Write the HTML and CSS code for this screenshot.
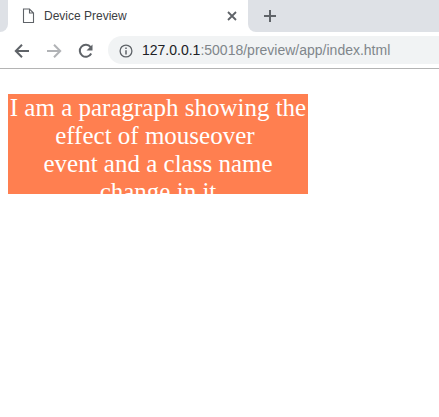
FILE: index.html
```html
<!DOCTYPE html>
<html lang="en">
<head>
    <meta charset="UTF-8">
    <title>Device Preview</title>
    <link rel="stylesheet" href="styles.css">
</head>
<body>
    <div class="browser">
        <div class="tabstrip">
            <div class="tab">
                <svg class="tab-icon" width="16" height="16" viewBox="0 0 16 16">
                    <path d="M2.5 1H8.5L12.5 5V14.5H2.5Z M8.5 1V5H12.5" fill="none" stroke="#5f6368" stroke-width="1.1"/>
                </svg>
                <span class="tab-title">Device Preview</span>
                <svg class="tab-close" width="10" height="10" viewBox="0 0 10 10">
                    <path d="M1 1L9 9M9 1L1 9" stroke="#5f6368" stroke-width="1.8"/>
                </svg>
            </div>
            <div class="tab-rest">
                <svg class="tab-new" width="14" height="14" viewBox="0 0 14 14">
                    <path d="M7 1V13M1 7H13" stroke="#5f6368" stroke-width="2"/>
                </svg>
            </div>
        </div>
        <div class="toolbar">
            <svg class="nav-icon" width="16" height="16" viewBox="0 0 16 16">
                <path d="M15 8H2M8 1.8L1.8 8L8 14.2" fill="none" stroke="#5f6368" stroke-width="2"/>
            </svg>
            <svg class="nav-icon" width="16" height="16" viewBox="0 0 16 16">
                <path d="M1 8H14M8 1.8L14.2 8L8 14.2" fill="none" stroke="#b1b3b6" stroke-width="2"/>
            </svg>
            <svg class="nav-icon" width="16" height="16" viewBox="0 0 16 16">
                <path d="M13.2 10.5A6 6 0 1 1 12.6 4.2" fill="none" stroke="#5f6368" stroke-width="2"/>
                <path d="M14.5 1.5V7.5H8.5Z" fill="#5f6368"/>
            </svg>
            <div class="omnibox">
                <svg class="info-icon" width="14" height="14" viewBox="0 0 14 14">
                    <circle cx="7" cy="7" r="5.9" fill="none" stroke="#5f6368" stroke-width="1.3"/>
                    <path d="M7 6.2V10.4M7 3.6V5" stroke="#5f6368" stroke-width="1.5"/>
                </svg>
                <span class="url"><span class="url-host">127.0.0.1</span>:50018/preview/app/index.html</span>
            </div>
        </div>
    </div>

    <p class="box">I am a paragraph showing the effect of mouseover&nbsp;<br>event and a class name change in it</p>
</body>
</html>
```

FILE: styles.css
```css
body {
    margin: 0;
    background-color: #fff;
    font-family: "Liberation Serif", serif;
}
.browser {
    font-family: "Liberation Sans", sans-serif;
    border-bottom: 1px solid #b4b4b4;
}
.tabstrip {
    display: flex;
    height: 32px;
    background-color: #fff;
    padding-left: 8px;
}
.tabstrip::before {
    content: "";
    width: 8px;
    margin-left: -8px;
    background-color: #dee1e6;
    border-bottom-right-radius: 8px;
}
.tab {
    width: 240px;
    display: flex;
    align-items: center;
    padding-left: 13px;
    padding-right: 5px;
    box-sizing: border-box;
}
.tab-icon {
    margin-right: 7px;
}
.tab-title {
    flex: 1;
    font-size: 12px;
    color: #3c4043;
}
.tab-close {
    margin-right: 6px;
}
.tab-rest {
    flex: 1;
    display: flex;
    align-items: center;
    padding-left: 15px;
    background-color: #dee1e6;
    border-bottom-left-radius: 8px;
}
.toolbar {
    display: flex;
    align-items: center;
    height: 36px;
    padding-left: 14px;
    gap: 16px;
}
.nav-icon {
    margin-top: 2px;
}
.omnibox {
    flex: 1;
    display: flex;
    align-items: center;
    height: 28px;
    margin-left: -2px;
    padding-left: 11px;
    background-color: #f1f3f4;
    border-radius: 14px 0 0 14px;
}
.info-icon {
    margin-top: 2px;
    margin-right: 9px;
}
.url {
    font-size: 14px;
    color: #80868b;
}
.url-host {
    color: #202124;
}
.box {
    width: 300px;
    height: 100px;
    margin: 25px 8px;
    overflow: hidden;
    background-color: coral;
    color: #fff;
    font-size: 25px;
    line-height: 28px;
    text-align: center;
}
```
